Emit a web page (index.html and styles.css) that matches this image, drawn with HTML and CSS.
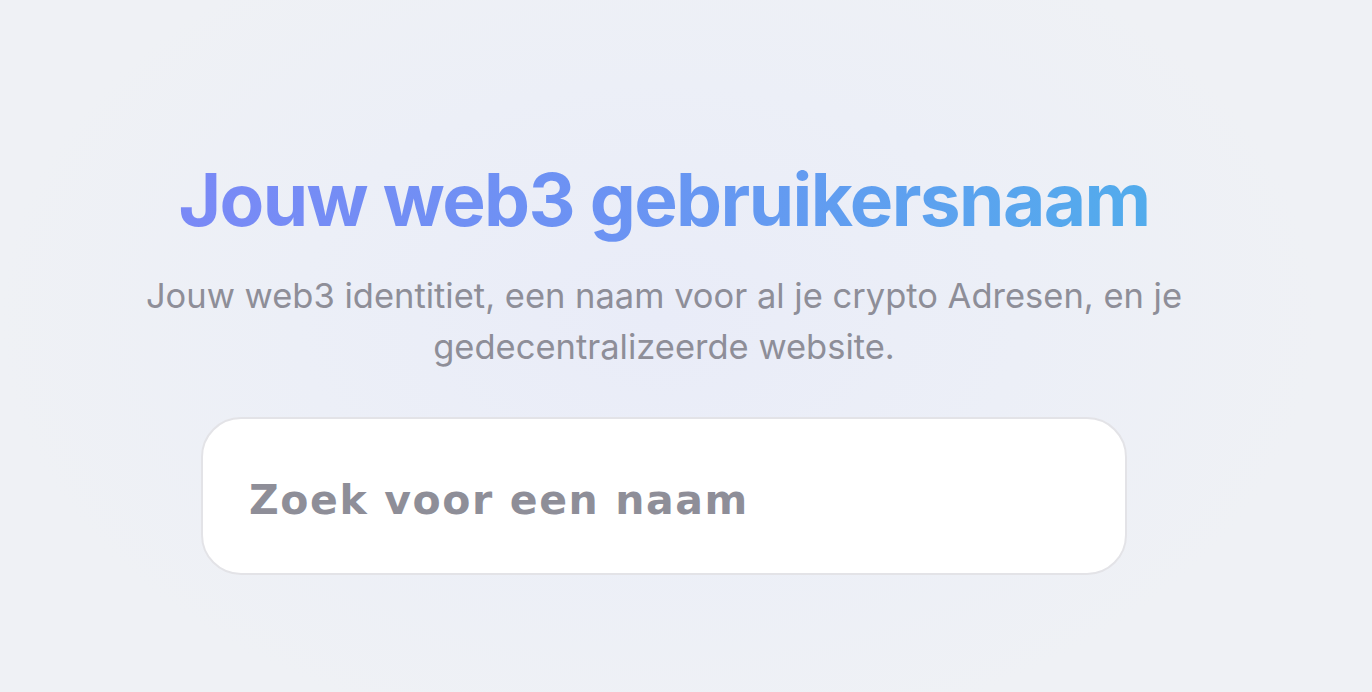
FILE: index.html
```html
<!DOCTYPE html>
<html lang="nl">
<head>
<meta charset="utf-8">
<title>Jouw web3 gebruikersnaam</title>
<link rel="stylesheet" href="styles.css">
</head>
<body>
<main class="hero">
  <h1 class="hero-title">Jouw web3 gebruikersnaam</h1>
  <p class="hero-sub">Jouw web3 identitiet, een naam voor al je crypto Adresen, en je gedecentralizeerde website.</p>
  <form class="search" onsubmit="return false">
    <input class="search-input" type="text" placeholder="Zoek voor een naam" aria-label="Zoek voor een naam">
  </form>
</main>
</body>
</html>
```

FILE: styles.css
```css
* { box-sizing: border-box; }

html, body {
  margin: 0;
  height: 100%;
}

body {
  background: radial-gradient(ellipse 48% 62% at 48% 46%, #e9ecf8 0%, #eceff7 55%, #eff1f5 100%);
  font-family: Inter, "Noto Sans", "Liberation Sans", sans-serif;
  overflow: hidden;
}

.hero {
  width: 1328px;
  display: flex;
  flex-direction: column;
  align-items: center;
  padding-top: 156px;
}

.hero-title {
  margin: 0;
  padding: 0 4px;
  font-size: 73px;
  line-height: 1.2;
  font-weight: 700;
  letter-spacing: -1.6px;
  background: linear-gradient(90deg, #7a89f6 0%, #6b93f3 45%, #52acec 100%);
  -webkit-background-clip: text;
  background-clip: text;
  color: transparent;
}

.hero-sub {
  margin: 26px 0 0;
  max-width: 1070px;
  text-align: center;
  font-size: 34.5px;
  line-height: 51px;
  font-weight: 400;
  color: #8e8e98;
}

.search {
  margin-top: 45px;
  width: 926px;
  height: 158px;
  background: #ffffff;
  border: 2px solid #e3e3e7;
  border-radius: 40px;
  display: flex;
  align-items: center;
  padding: 8px 46px 0;
}

.search-input {
  flex: 1;
  border: 0;
  outline: 0;
  background: transparent;
  font-family: "DejaVu Sans", Inter, sans-serif;
  font-size: 41px;
  font-weight: 700;
  letter-spacing: 1.6px;
  color: #3b3b45;
  padding: 0;
}

.search-input::placeholder {
  color: #8e8e98;
  opacity: 1;
}
```
